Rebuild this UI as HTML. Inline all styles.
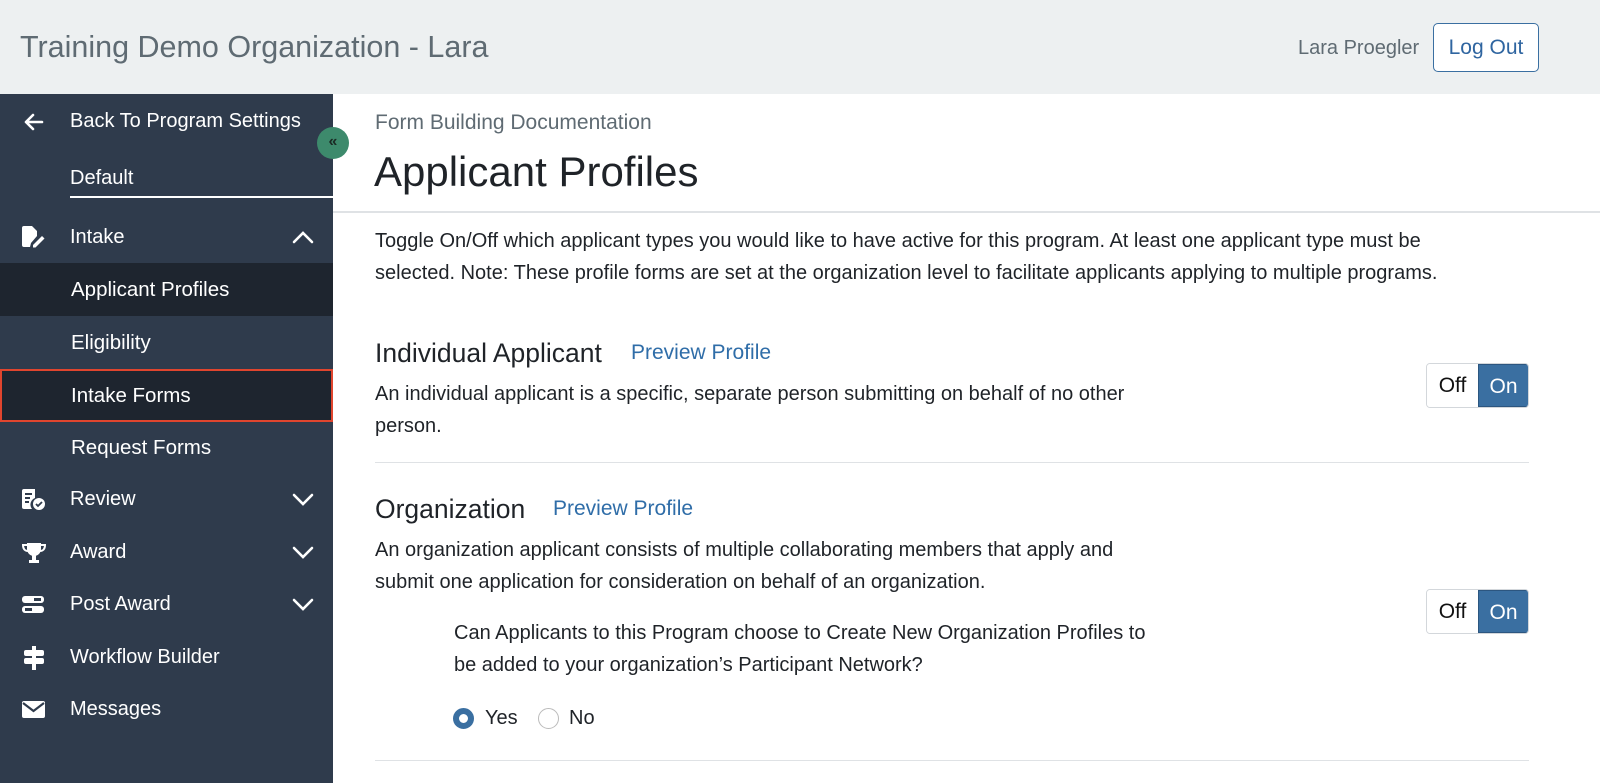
<!DOCTYPE html>
<html><head><meta charset="utf-8">
<style>
*{margin:0;padding:0;box-sizing:border-box}
body{width:1600px;height:783px;overflow:hidden;background:#fff;font-family:"Liberation Sans",sans-serif;position:relative}
.a{position:absolute;white-space:nowrap}
#hdr{position:absolute;left:0;top:0;width:1600px;height:94px;background:#edf0f1}
#side{position:absolute;left:0;top:94px;width:333px;height:689px;background:#2f3b4c}
.nav{position:absolute;left:0;width:333px;height:53px;color:#fff;font-size:20px;line-height:53px}
.nav .t{position:absolute;left:70px}
.nav svg{position:absolute}
.chev{position:absolute;left:292px;top:19px}
.sub .t{left:71px;font-size:20.5px}
.p{color:#1f2328;font-size:20px}
.tog{position:absolute;left:1426px;width:103px;height:45px;border:1px solid #d3d7db;border-radius:4px;overflow:hidden;font-size:21px}
.tog .off{position:absolute;left:0;top:0;width:51px;height:43px;line-height:43px;text-align:center;color:#111;background:#fff}
.tog .on{position:absolute;left:51px;top:0;width:51px;height:43px;line-height:43px;text-align:center;color:#fff;background:#3a6fa1;border:1px solid #2c5680}
</style></head><body>
<div id="hdr"></div>
<div class="a" style="left:20px;top:29px;font-size:30.5px;color:#5f6b73;line-height:36px">Training Demo Organization - Lara</div>
<div class="a" style="left:1298px;top:36px;font-size:20px;color:#5f6b73;line-height:24px">Lara Proegler</div>
<div class="a" style="left:1433px;top:23px;width:106px;height:49px;border:1px solid #3a6fa1;border-radius:5px;background:#fff;color:#2f65a0;font-size:21px;line-height:47px;text-align:center">Log Out</div>

<div id="side"></div>
<div class="nav" style="top:95px"><svg style="left:24px;top:18px" width="20" height="18" viewBox="0 0 20 18"><path d="M9 2 2 9l7 7M2 9h16" stroke="#fff" stroke-width="2.6" fill="none" stroke-linecap="round" stroke-linejoin="round"/></svg><span class="t">Back To Program Settings</span></div>
<div class="nav" style="top:152px"><span class="t">Default</span></div>
<div class="a" style="left:70px;top:196px;width:263px;height:2px;background:#fff"></div>
<div class="a" style="left:317px;top:127px;width:32px;height:32px;border-radius:50%;background:#3d8a6c;color:#1b2a24;font-size:16px;line-height:30px;text-align:center;font-weight:bold">«</div>

<div class="nav" style="top:211px"><svg style="left:21px;top:15px" width="26" height="22" viewBox="0 0 26 22"><path d="M1 2a2 2 0 0 1 2-2h8l5 5v5l-6 7-1 4H3a2 2 0 0 1-2-2z" fill="#fff"/><path d="M12 19l9-9 2.5 2.5-9 9H12z" fill="#fff"/></svg><span class="t">Intake</span><svg class="chev" width="22" height="14" viewBox="0 0 22 14"><path d="M2 12 11 3l9 9" stroke="#fff" stroke-width="2.6" fill="none" stroke-linecap="round"/></svg></div>
<div class="nav sub" style="top:263px;background:#1e252f"><span class="t">Applicant Profiles</span></div>
<div class="nav sub" style="top:316px"><span class="t">Eligibility</span></div>
<div class="nav sub" style="top:369px;background:#1e252f;border:2px solid #e0452e;line-height:49px"><span class="t" style="left:69px">Intake Forms</span></div>
<div class="nav sub" style="top:421px"><span class="t">Request Forms</span></div>
<div class="nav" style="top:473px"><svg style="left:21px;top:16px" width="26" height="22" viewBox="0 0 26 22"><path d="M1 2a2 2 0 0 1 2-2h11v9a7 7 0 0 0-3 11H3a2 2 0 0 1-2-2z" fill="#fff"/><path d="M4 5h7M4 9h5M4 13h4" stroke="#2f3b4c" stroke-width="2"/><circle cx="18" cy="15" r="6" fill="#fff"/><path d="M15 15l2 2 4-4" stroke="#2f3b4c" stroke-width="1.8" fill="none"/></svg><span class="t">Review</span><svg class="chev" width="22" height="14" viewBox="0 0 22 14"><path d="M2 3l9 9 9-9" stroke="#fff" stroke-width="2.6" fill="none" stroke-linecap="round"/></svg></div>
<div class="nav" style="top:526px"><svg style="left:21px;top:16px" width="26" height="22" viewBox="0 0 26 22"><path d="M6 1h14v6a7 7 0 0 1-14 0z" fill="#fff"/><path d="M6 3H2c0 4 2 6 5 6M20 3h4c0 4-2 6-5 6" stroke="#fff" stroke-width="2" fill="none"/><rect x="11" y="13" width="4" height="5" fill="#fff"/><rect x="8" y="18" width="10" height="3" fill="#fff"/></svg><span class="t">Award</span><svg class="chev" width="22" height="14" viewBox="0 0 22 14"><path d="M2 3l9 9 9-9" stroke="#fff" stroke-width="2.6" fill="none" stroke-linecap="round"/></svg></div>
<div class="nav" style="top:578px"><svg style="left:21px;top:17px" width="26" height="20" viewBox="0 0 26 20"><rect x="1" y="1" width="22" height="7" rx="3" fill="#fff"/><rect x="1" y="11" width="22" height="7" rx="3" fill="#fff"/><rect x="13" y="3" width="7" height="3" fill="#2f3b4c"/><rect x="4" y="13" width="7" height="3" fill="#2f3b4c"/></svg><span class="t">Post Award</span><svg class="chev" width="22" height="14" viewBox="0 0 22 14"><path d="M2 3l9 9 9-9" stroke="#fff" stroke-width="2.6" fill="none" stroke-linecap="round"/></svg></div>
<div class="nav" style="top:631px"><svg style="left:22px;top:15px" width="24" height="24" viewBox="0 0 24 24"><rect x="10" y="0" width="4" height="24" fill="#fff"/><rect x="2" y="4" width="20" height="6" rx="2" fill="#fff"/><rect x="2" y="12" width="20" height="6" rx="2" fill="#fff"/></svg><span class="t">Workflow Builder</span></div>
<div class="nav" style="top:683px"><svg style="left:22px;top:18px" width="24" height="18" viewBox="0 0 24 18"><rect x="0" y="0" width="23" height="17" rx="2" fill="#fff"/><path d="M1 2l10.5 8L22 2" stroke="#2f3b4c" stroke-width="2.2" fill="none"/></svg><span class="t">Messages</span></div>

<div class="a" style="left:375px;top:111px;font-size:21px;color:#5f6b73;line-height:24px">Form Building Documentation</div>
<div class="a" style="left:374px;top:148px;font-size:42px;color:#1f2328;line-height:48px">Applicant Profiles</div>
<div class="a" style="left:333px;top:211px;width:1267px;height:2px;background:#dfe2e5"></div>
<div class="a p" style="left:375px;top:225px;line-height:32px">Toggle On/Off which applicant types you would like to have active for this program. At least one applicant type must be<br>selected. Note: These profile forms are set at the organization level to facilitate applicants applying to multiple programs.</div>

<div class="a" style="left:375px;top:338px;font-size:26.5px;color:#1f2328;line-height:30px">Individual Applicant</div>
<div class="a" style="left:631px;top:341px;font-size:21px;color:#2f6da8;line-height:24px">Preview Profile</div>
<div class="a p" style="left:375px;top:378px;line-height:32px">An individual applicant is a specific, separate person submitting on behalf of no other<br>person.</div>
<div class="tog" style="top:363px"><div class="off">Off</div><div class="on">On</div></div>
<div class="a" style="left:375px;top:462px;width:1154px;height:1px;background:#dfe2e5"></div>

<div class="a" style="left:375px;top:494px;font-size:26.5px;color:#1f2328;line-height:30px">Organization</div>
<div class="a" style="left:553px;top:497px;font-size:21px;color:#2f6da8;line-height:24px">Preview Profile</div>
<div class="a p" style="left:375px;top:534px;line-height:32px">An organization applicant consists of multiple collaborating members that apply and<br>submit one application for consideration on behalf of an organization.</div>
<div class="tog" style="top:589px"><div class="off">Off</div><div class="on">On</div></div>
<div class="a p" style="left:454px;top:617px;line-height:32px">Can Applicants to this Program choose to Create New Organization Profiles to<br>be added to your organization’s Participant Network?</div>
<div class="a" style="left:453px;top:708px;width:21px;height:21px;border-radius:50%;border:6px solid #3a6fa1;background:#fff"></div>
<div class="a p" style="left:485px;top:707px;font-size:20px;line-height:22px">Yes</div>
<div class="a" style="left:538px;top:708px;width:21px;height:21px;border-radius:50%;border:1px solid #bbb;background:#fff"></div>
<div class="a p" style="left:569px;top:707px;font-size:20px;line-height:22px">No</div>
<div class="a" style="left:375px;top:760px;width:1154px;height:1px;background:#dfe2e5"></div>
</body></html>
